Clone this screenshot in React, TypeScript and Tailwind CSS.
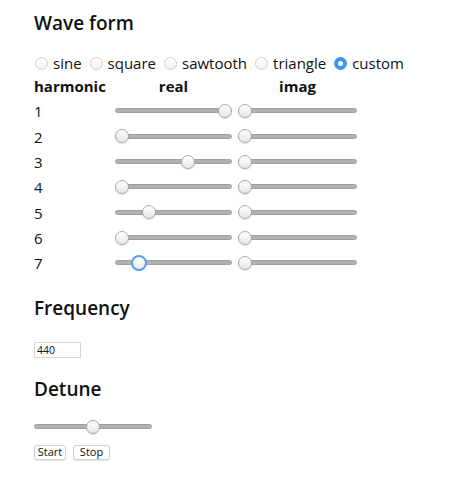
import React from "react";

const FONT = "font-['Open_Sans',sans-serif]";

function Slider({ value, width, focused = false }: { value: number; width: number; focused?: boolean }) {
  const thumb = 14;
  const left = (width - thumb) * value;
  return (
    <div className="relative h-[14px]" style={{ width }}>
      <div className="absolute left-0 right-0 top-[4.5px] h-[5px] rounded-full bg-[#b2b2b2] border border-[#a0a0a0]" />
      <div
        className={
          focused
            ? "absolute top-[-1px] h-[16px] w-[16px] rounded-full border-[2.5px] border-[#5b9cf0] bg-gradient-to-b from-white to-[#ececec]"
            : "absolute top-0 h-[14px] w-[14px] rounded-full border border-[#a9a9a9] bg-gradient-to-b from-white to-[#e6e6e6] shadow-[0_1px_1px_rgba(0,0,0,0.12)]"
        }
        style={{ left: focused ? left - 1 : left }}
      />
    </div>
  );
}

function Radio({ checked = false }: { checked?: boolean }) {
  if (checked) {
    return (
      <div className="flex h-[13px] w-[13px] items-center justify-center rounded-full bg-[#3d95f7]">
        <div className="h-[5px] w-[5px] rounded-full bg-white" />
      </div>
    );
  }
  return <div className="h-[13px] w-[13px] rounded-full border border-[#cfcfcf] bg-gradient-to-b from-white to-[#f2f2f2]" />;
}

const rows: [number, number][] = [
  [1, 1],
  [2, 0],
  [3, 0.64],
  [4, 0],
  [5, 0.26],
  [6, 0],
  [7, 0.165],
];

export default function App() {
  const waves = ["sine", "square", "sawtooth", "triangle", "custom"];
  return (
    <div className={`${FONT} min-h-[484px] w-[474px] bg-white pl-[34px] text-[#111]`}>
      <div className="pt-[13px]">
        <div className="h-[20px] text-[19px] font-semibold leading-[20px]">Wave form</div>
      </div>
      <div className="mt-[20px] flex h-[20px] items-center text-[15px]">
        {waves.map((w, i) => (
          <div key={w} className="flex items-center">
            <div className={i === 0 ? "ml-[1px]" : "ml-[8px]"}>
              <Radio checked={w === "custom"} />
            </div>
            <span className="ml-[5px] leading-[20px]">{w}</span>
          </div>
        ))}
      </div>
      <div className="grid grid-cols-[81px_123px_119px] text-[15px]">
        <div className="flex h-[25.33px] items-center pt-[1px] font-bold">harmonic</div>
        <div className="flex h-[25.33px] w-[117px] items-center justify-center pt-[1px] font-bold">real</div>
        <div className="flex h-[25.33px] items-center justify-center pt-[1px] font-bold">imag</div>
        {rows.map(([n, v]) => (
          <React.Fragment key={n}>
            <div className="flex h-[25.33px] items-center pt-[1px]">{n}</div>
            <div className="flex h-[25.33px] items-center">
              <Slider value={v} width={117} focused={n === 7} />
            </div>
            <div className="flex h-[25.33px] items-center">
              <Slider value={0} width={119} />
            </div>
          </React.Fragment>
        ))}
      </div>
      <div className="mt-[22.7px] h-[20px] text-[19px] font-semibold leading-[20px]">Frequency</div>
      <div className="mt-[23.3px] flex h-[16px] w-[47px] items-center border border-[#d6d6d6] pl-[2px] text-[10.5px] leading-[14px]">
        440
      </div>
      <div className="mt-[21.5px] h-[20px] text-[19px] font-semibold leading-[20px]">Detune</div>
      <div className="mt-[20.5px]">
        <Slider value={0.5} width={118} />
      </div>
      <div className="mt-[11px] flex gap-[7px] text-[11px]">
        <div className="flex h-[15px] w-[32px] items-center justify-center rounded-[3px] border border-[#d0d0d0] bg-white shadow-[0_1px_1px_rgba(0,0,0,0.1)]">
          Start
        </div>
        <div className="flex h-[15px] w-[37px] items-center justify-center rounded-[3px] border border-[#d0d0d0] bg-white shadow-[0_1px_1px_rgba(0,0,0,0.1)]">
          Stop
        </div>
      </div>
    </div>
  );
}
